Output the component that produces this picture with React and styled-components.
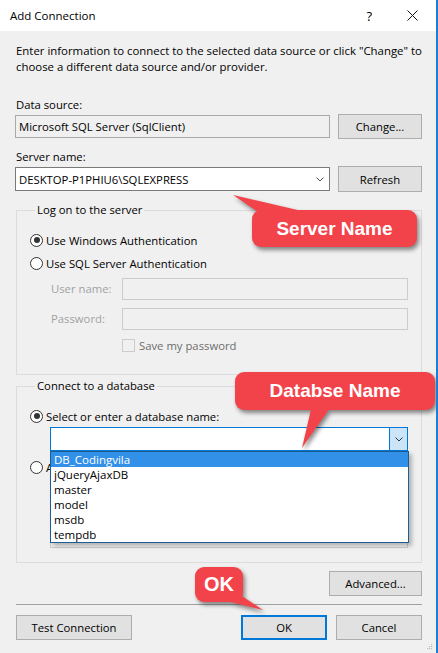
import React from "react";
import styled, { createGlobalStyle } from "styled-components";

const GlobalStyle = createGlobalStyle`
  html, body {
    margin: 0;
    padding: 0;
    background: #f0f0f0;
  }

  *, *:before, *:after {
    box-sizing: border-box;
  }
`;

const UI_FONT = `"Open Sans", "Noto Sans", "Liberation Sans", sans-serif`;

const Window = styled.div`
  position: relative;
  width: 438px;
  height: 653px;
  overflow: hidden;
  background: #f0f0f0;
  border-right: 2px solid #1a7dd6;
  font-family: ${UI_FONT};
  font-size: 11.3px;
  color: #000;
`;

const TitleBar = styled.div`
  display: flex;
  align-items: center;
  height: 31px;
  padding: 0 18px 0 10px;
  background: #fff;
`;

const Title = styled.span`
  flex: 1;
  font-size: 11.5px;
`;

const HelpGlyph = styled.span`
  font-size: 13px;
  margin-right: 35px;
`;

const Content = styled.div`
  padding: 12px 14px 0 15px;
`;

const Description = styled.p`
  margin: 0 0 0 1px;
  line-height: 16px;
  font-size: 11.4px;
`;

const Label = styled.div`
  line-height: 16px;
  padding-left: 1px;
  margin-top: ${(p) => p.$top || 0}px;
  color: ${(p) => (p.$disabled ? "#a2a2a2" : "#000")};
`;

const FieldRow = styled.div`
  display: grid;
  grid-template-columns: 1fr 84px;
  column-gap: 8px;
  align-items: center;
  margin-top: 1px;
  height: 25px;
`;

const TextBox = styled.div`
  display: flex;
  align-items: center;
  height: ${(p) => p.$h || 23}px;
  padding-left: 3px;
  border: 1px solid ${(p) => (p.$readOnly ? "#a9a9a9" : "#7a7a7a")};
  background: ${(p) => (p.$readOnly ? "#f0f0f0" : "#fff")};
  white-space: nowrap;
`;

const ComboText = styled.span`
  flex: 1;
`;

const ComboArrow = styled.span`
  display: flex;
  justify-content: center;
  width: 18px;
`;

const Button = styled.button`
  height: ${(p) => p.$h || 25}px;
  width: ${(p) => (p.$w ? `${p.$w}px` : "auto")};
  margin: 0;
  padding: 0;
  font-family: ${UI_FONT};
  font-size: 11.3px;
  color: #000;
  background: #e1e1e1;
  border: ${(p) => (p.$default ? "2px solid #0078d7" : "1px solid #adadad")};
`;

const Group = styled.fieldset`
  margin: ${(p) => p.$top}px 0 0 1px;
  padding: ${(p) => p.$padTop}px 13px ${(p) => p.$padBottom}px 13px;
  border: 1px solid #dcdcdc;
  min-width: 0;
`;

const Legend = styled.legend`
  margin-left: 5px;
  padding: 0 2px;
  line-height: 16px;
`;

const Stack = styled.div`
  display: flex;
  flex-direction: column;
  gap: ${(p) => p.$gap}px;
  margin-top: ${(p) => p.$top || 0}px;
`;

const RadioRow = styled.label`
  display: flex;
  align-items: center;
  gap: 3px;
  height: 16px;
  white-space: nowrap;
`;

const RadioDot = styled.span`
  position: relative;
  width: 13px;
  height: 13px;
  border: 1px solid #333;
  border-radius: 50%;
  background: #fff;

  &::after {
    content: "";
    display: ${(p) => (p.$checked ? "block" : "none")};
    position: absolute;
    left: 2.5px;
    top: 2.5px;
    width: 6px;
    height: 6px;
    border-radius: 50%;
    background: #333;
  }
`;

const CredentialGrid = styled.div`
  display: grid;
  grid-template-columns: 72px 1fr;
  row-gap: 8px;
  align-items: center;
  margin-left: 20px;
`;

const DisabledBox = styled.div`
  height: 22px;
  border: 1px solid #cccccc;
  background: #f0f0f0;
`;

const CheckRow = styled.label`
  display: flex;
  align-items: center;
  gap: 4px;
  height: 16px;
  margin-left: 92px;
  color: #6d6d6d;
`;

const CheckBox = styled.span`
  width: 13px;
  height: 13px;
  border: 1px solid #cccccc;
  background: #f0f0f0;
`;

const Indented = styled.div`
  margin-left: 20px;
  margin-top: ${(p) => p.$top || 0}px;
`;

const ComboWrap = styled.div`
  position: relative;
  margin-left: 20px;
  margin-top: 3px;
`;

const OpenCombo = styled.div`
  display: flex;
  height: 24px;
  border: 1px solid #0078d7;
  background: #fff;
`;

const ComboButton = styled.span`
  display: flex;
  align-items: center;
  justify-content: center;
  width: 18px;
  margin-left: auto;
  background: #cce4f7;
  border-left: 1px solid #0078d7;
`;

const DropList = styled.ul`
  position: absolute;
  top: 100%;
  left: 0;
  right: -1px;
  margin: 0;
  padding: 0;
  list-style: none;
  background: #fff;
  border: 1px solid #1c5d96;
  box-shadow: 3px 3px 4px rgba(0, 0, 0, 0.25);
  z-index: 2;
`;

const DropItem = styled.li`
  height: 15px;
  line-height: 15px;
  padding-left: 3px;
  font-size: 11.5px;
  color: ${(p) => (p.$active ? "#fff" : "#000")};
  background: ${(p) => (p.$active ? "#3390e8" : "transparent")};
`;

const ActionRow = styled.div`
  display: flex;
  justify-content: flex-end;
  margin-top: ${(p) => p.$top}px;
`;

const Separator = styled.hr`
  margin: 8px 0 0 1px;
  border: 0;
  border-top: 1px solid #a0a0a0;
`;

const FooterRow = styled.div`
  display: flex;
  gap: 9px;
  margin: 10px 0 0 1px;
`;

const Spacer = styled.span`
  flex: 1;
`;

const Grip = styled.svg`
  position: absolute;
  right: 3px;
  bottom: 3px;
`;

/* red annotation bubbles drawn on top of the dialog */
const Overlay = styled.svg`
  position: absolute;
  inset: 0;
  pointer-events: none;
  filter: drop-shadow(2px 3px 2px rgba(0, 0, 0, 0.45));
  z-index: 5;
`;

const BubbleText = styled.div`
  position: absolute;
  left: ${(p) => p.$x}px;
  top: ${(p) => p.$y}px;
  width: ${(p) => p.$w}px;
  height: ${(p) => p.$h}px;
  display: flex;
  align-items: center;
  justify-content: center;
  font-family: "Liberation Sans", Arial, sans-serif;
  font-weight: bold;
  font-size: ${(p) => p.$size || 19}px;
  color: #fff;
  z-index: 6;
`;

const Chevron = ({ color = "#555" }) => (
  <svg width="8" height="5" viewBox="0 0 8 5">
    <path d="M0.5 0.5 L4 4 L7.5 0.5" fill="none" stroke={color} strokeWidth="1" />
  </svg>
);

const bubbles = [
  {
    text: "Server Name",
    box: [252, 210, 165, 37],
    tail: "M233 195 L302 211 L264 216 Z",
  },
  {
    text: "Databse Name",
    box: [235, 372, 200, 38],
    tail: "M302 448 L312 405 L332 405 Z",
  },
  {
    text: "OK",
    box: [195, 567, 48, 35],
    size: 20,
    tail: "M263 610 L236 592 L222 600 Z",
  },
];

const databases = ["DB_Codingvila", "jQueryAjaxDB", "master", "model", "msdb", "tempdb"];

export default function App() {
  return (
    <Window>
      <GlobalStyle />
      <TitleBar>
        <Title>Add Connection</Title>
        <HelpGlyph>?</HelpGlyph>
        <svg width="11" height="11" viewBox="0 0 11 11">
          <path d="M0.5 0.5 L10.5 10.5 M10.5 0.5 L0.5 10.5" stroke="#111" strokeWidth="1" />
        </svg>
      </TitleBar>

      <Content>
        <Description>
          Enter information to connect to the selected data source or click "Change" to
          choose a different data source and/or provider.
        </Description>

        <Label $top={22}>Data source:</Label>
        <FieldRow>
          <TextBox $readOnly>Microsoft SQL Server (SqlClient)</TextBox>
          <Button>Change...</Button>
        </FieldRow>

        <Label $top={10}>Server name:</Label>
        <FieldRow>
          <TextBox $h={24}>
            <ComboText>DESKTOP-P1PHIU6\SQLEXPRESS</ComboText>
            <ComboArrow>
              <Chevron />
            </ComboArrow>
          </TextBox>
          <Button $h={26}>Refresh</Button>
        </FieldRow>

        <Group $top={11} $padTop={14} $padBottom={21}>
          <Legend>Log on to the server</Legend>
          <Stack $gap={7}>
            <RadioRow>
              <RadioDot $checked />
              Use Windows Authentication
            </RadioRow>
            <RadioRow>
              <RadioDot />
              Use SQL Server Authentication
            </RadioRow>
            <CredentialGrid>
              <Label $disabled>User name:</Label>
              <DisabledBox />
              <Label $disabled>Password:</Label>
              <DisabledBox />
            </CredentialGrid>
            <CheckRow>
              <CheckBox />
              Save my password
            </CheckRow>
          </Stack>
        </Group>

        <Group $top={3} $padTop={14} $padBottom={14}>
          <Legend>Connect to a database</Legend>
          <RadioRow>
            <RadioDot $checked />
            Select or enter a database name:
          </RadioRow>
          <ComboWrap>
            <OpenCombo>
              <ComboButton>
                <Chevron color="#333" />
              </ComboButton>
            </OpenCombo>
            <DropList>
              {databases.map((name, i) => (
                <DropItem key={name} $active={i === 0}>
                  {name}
                </DropItem>
              ))}
            </DropList>
          </ComboWrap>
          <Stack $gap={5} $top={8}>
            <RadioRow>
              <RadioDot />
              Attach a database file:
            </RadioRow>
            <Indented>
              <DisabledBox />
            </Indented>
            <Indented $top={19}>
              <DisabledBox />
            </Indented>
          </Stack>
        </Group>

        <ActionRow $top={8}>
          <Button $w={93}>Advanced...</Button>
        </ActionRow>

        <Separator />

        <FooterRow>
          <Button $w={116}>Test Connection</Button>
          <Spacer />
          <Button $w={86} $default>
            OK
          </Button>
          <Button $w={86}>Cancel</Button>
        </FooterRow>
      </Content>

      <Grip width="7" height="7" viewBox="0 0 7 7">
        {[
          [5, 1],
          [5, 3],
          [3, 3],
          [5, 5],
          [3, 5],
          [1, 5],
        ].map(([x, y]) => (
          <rect key={`${x}-${y}`} x={x} y={y} width="1.2" height="1.2" fill="#bbb" />
        ))}
      </Grip>

      <Overlay width="438" height="653" viewBox="0 0 438 653">
        {bubbles.map((b) => (
          <g key={b.text} fill="#f3434a">
            <rect x={b.box[0]} y={b.box[1]} width={b.box[2]} height={b.box[3]} rx="9" />
            <path d={b.tail} />
          </g>
        ))}
      </Overlay>
      {bubbles.map((b) => (
        <BubbleText
          key={b.text}
          $x={b.box[0]}
          $y={b.box[1]}
          $w={b.box[2]}
          $h={b.box[3]}
          $size={b.size}
        >
          {b.text}
        </BubbleText>
      ))}
    </Window>
  );
}
